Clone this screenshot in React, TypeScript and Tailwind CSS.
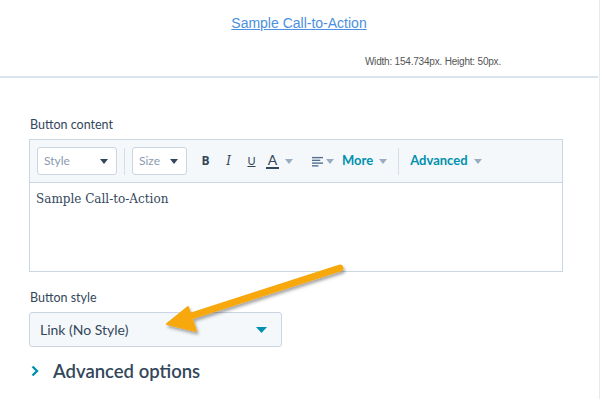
import React from "react";

const Caret = ({ className = "" }: { className?: string }) => (
  <svg viewBox="0 0 8 5" className={className} width="8" height="5">
    <path d="M0 0h8L4 5z" fill="currentColor" />
  </svg>
);

function ToolbarSelect({ label, width }: { label: string; width: string }) {
  return (
    <div
      className={`${width} h-[28px] bg-white border border-[#cbd6e2] rounded-[3px] flex items-center justify-between pl-[6px] pr-[8px]`}
    >
      <span className="text-[12px] text-[#8a9bb0]">{label}</span>
      <Caret className="text-[#33475b]" />
    </div>
  );
}

export default function App() {
  return (
    <div
      className="relative w-[600px] h-[399px] bg-white overflow-hidden border-r border-[#e5eaf0]"
      style={{ fontFamily: "Lato, 'Open Sans', sans-serif" }}
    >
      {/* preview */}
      <div className="h-[78px] border-b-2 border-[#dbe3ec] w-[598px] flex flex-col">
        <div className="flex justify-center pt-[13px]">
          <a
            href="#"
            className="text-[14px] text-[#4a8fe0] underline leading-[20px]"
            style={{ fontFamily: "'Liberation Sans', Arial, sans-serif" }}
          >
            Sample Call-to-Action
          </a>
        </div>
        <div
          className="mt-auto mb-[7px] text-right pr-[97px] text-[10px] tracking-[-0.2px] text-[#555] leading-[14px]"
          style={{ fontFamily: "'Liberation Sans', Arial, sans-serif" }}
        >
          Width: 154.734px. Height: 50px.
        </div>
      </div>

      {/* form */}
      <div className="pl-[29px] pt-[39px] w-[563px]">
        <div className="text-[12.5px] text-[#33475b] leading-[16px] mb-[6px] pl-[1px]">Button content</div>
        <div className="border border-[#cbd6e2]">
          <div className="h-[43px] bg-[#f5f8fa] border-b border-[#cbd6e2] flex items-center pl-[7px]">
            <ToolbarSelect label="Style" width="w-[80px]" />
            <div className="w-px h-[27px] bg-[#d6dfe8] mx-[7px]" />
            <ToolbarSelect label="Size" width="w-[55px]" />
            <div className="flex items-center ml-[7px] text-[#33475b] text-[12px]">
              <span className="font-bold w-[23px] text-center" style={{ fontFamily: "'Open Sans', sans-serif" }}>B</span>
              <span className="italic w-[23px] text-center" style={{ fontFamily: "'DejaVu Serif', serif" }}>I</span>
              <span className="underline w-[23px] text-center text-[11px]">U</span>
              <span className="w-[13px] text-center text-[14px] border-b-2 border-[#33475b] leading-[14px] ml-[3px]">A</span>
              <Caret className="text-[#99acc2] ml-[6px]" />
              <svg width="11" height="11" viewBox="0 0 12 11" className="ml-[19px] text-[#516f90]">
                <rect x="0" y="0.5" width="12" height="1.5" fill="currentColor" />
                <rect x="0" y="3.5" width="9" height="1.5" fill="currentColor" />
                <rect x="0" y="6.5" width="12" height="1.5" fill="currentColor" />
                <rect x="0" y="9.5" width="7" height="1.5" fill="currentColor" />
              </svg>
              <Caret className="text-[#99acc2] ml-[3px]" />
              <span className="ml-[8px] text-[13px] font-bold text-[#0091ae]">More</span>
              <Caret className="text-[#99acc2] ml-[6px]" />
              <div className="w-px h-[27px] bg-[#d6dfe8] ml-[11px]" />
              <span className="ml-[11px] text-[13px] font-bold text-[#0091ae]">Advanced</span>
              <Caret className="text-[#99acc2] ml-[6px]" />
            </div>
          </div>
          <div className="h-[88px] bg-white px-[6px] pt-[8px]">
            <div
              className="text-[12px] text-[#33475b] leading-[16px]"
              style={{ fontFamily: "'DejaVu Serif', Georgia, serif" }}
            >
              Sample Call-to-Action
            </div>
          </div>
        </div>

        <div className="text-[12.5px] text-[#33475b] leading-[16px] mt-[18px] mb-[6px] pl-[1px]">Button style</div>
        <div className="w-[253px] h-[35px] bg-[#f5f8fa] border border-[#cbd6e2] rounded-[3px] flex items-center justify-between pl-[10px] pr-[14px]">
          <span className="text-[14px] text-[#33475b]">Link (No Style)</span>
          <svg width="11" height="6" viewBox="0 0 11 6">
            <path d="M0 0h11L5.5 6z" fill="#0091ae" />
          </svg>
        </div>

        <div className="flex items-center mt-[12px] pl-[2px]">
          <svg width="8" height="12" viewBox="0 0 8 12" className="mr-[14px]">
            <path d="M1.5 1.5l4.5 4.5-4.5 4.5" stroke="#0091ae" strokeWidth="2.4" fill="none" />
          </svg>
          <span className="text-[18.5px] font-semibold text-[#33475b] leading-[24px]">Advanced options</span>
        </div>
      </div>

      {/* annotation arrow */}
      <svg className="absolute left-0 top-0 pointer-events-none" width="600" height="399">
        <defs>
          <filter id="sh" x="-20%" y="-20%" width="140%" height="140%">
            <feDropShadow dx="1.5" dy="2.5" stdDeviation="1.8" floodColor="#000" floodOpacity="0.35" />
          </filter>
        </defs>
        <g filter="url(#sh)" fill="#f6a80f" stroke="#f6a80f">
          <line x1="340" y1="268" x2="185" y2="318" strokeWidth="7" strokeLinecap="round" />
          <path d="M167 324 L188 307 L196 331 Z" strokeWidth="2" strokeLinejoin="round" />
        </g>
      </svg>
    </div>
  );
}
